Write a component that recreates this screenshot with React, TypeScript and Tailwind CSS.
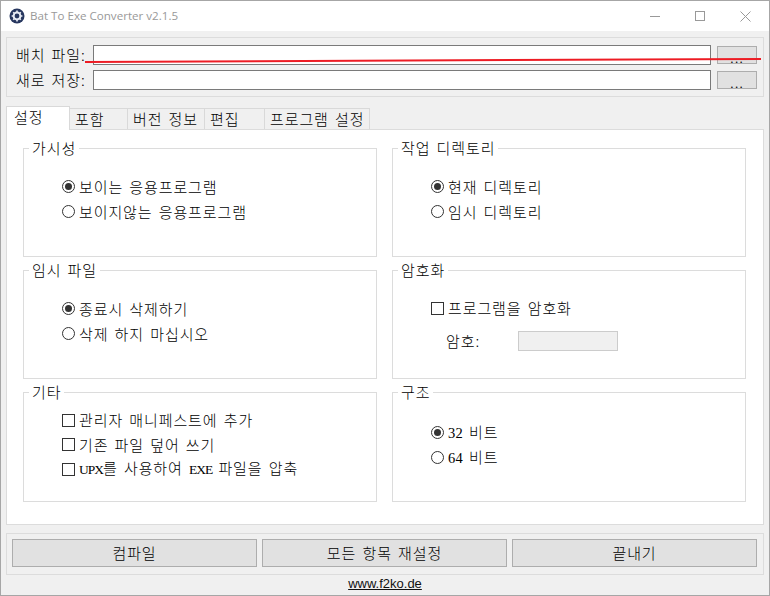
import React from "react";

const ko = "font-['Noto_Sans_CJK_KR','Noto_Sans',sans-serif] font-light text-[15px] tracking-[0.9px] [word-spacing:2px] leading-[20px] text-black";
// latin in the reference is a narrow serif bitmap face
const lat = "font-['Liberation_Serif',serif] font-normal text-[13.5px] tracking-[-1px]";
const num = "font-['Liberation_Serif',serif] font-normal text-[14.5px] tracking-[0.2px]";

function Radio({ label, on }: { label: React.ReactNode; on?: boolean }) {
  return (
    <div className="flex items-center h-[25px]">
      <span className="w-[13px] h-[13px] rounded-full border border-[#333] bg-white flex items-center justify-center mr-[4px]">
        {on && <span className="w-[7px] h-[7px] rounded-full bg-[#333]" />}
      </span>
      <span className={ko}>{label}</span>
    </div>
  );
}

function Check({ label }: { label: React.ReactNode }) {
  return (
    <div className="flex items-center h-[24.5px]">
      <span className="w-[13px] h-[13px] border border-[#333] bg-white mr-[4px]" />
      <span className={ko}>{label}</span>
    </div>
  );
}

function Group({ title, children, h = "h-[109px]" }: { title: string; children: React.ReactNode; h?: string }) {
  return (
    <div className={`border border-[#dcdcdc] ${h} w-[354px]`}>
      <div className={`${ko} -mt-[11px] ml-[5px] px-[3px] bg-white w-fit`}>{title}</div>
      {children}
    </div>
  );
}

function Tab({ label, w, active }: { label: string; w: string; active?: boolean }) {
  if (active) {
    return (
      <div className={`${w} h-[24px] -mt-[2px] -mb-[1px] z-10 bg-white border border-b-0 border-[#d9d9d9] pl-[7px] ${ko}`}>
        {label}
      </div>
    );
  }
  return (
    <div className={`${w} h-[21px] -ml-px bg-[#f0f0f0] border border-b-0 border-[#d9d9d9] pl-[5px] ${ko} leading-[18px]`}>
      {label}
    </div>
  );
}

function Row({ label }: { label: string }) {
  return (
    <div className="flex items-center h-[25px]">
      <span className={`${ko} w-[86px] pl-[9px]`}>{label}</span>
      <div className="w-[618px] h-[20px] bg-white border border-[#7a7a7a]" />
      <button className={`ml-[6px] w-[40px] h-[18px] mt-[1px] bg-[#e1e1e1] border border-[#adadad] ${ko} leading-[18px]`}>...</button>
    </div>
  );
}

function Btn({ label }: { label: string }) {
  return (
    <button className={`w-[245px] h-[28px] bg-[#e1e1e1] border border-[#adadad] ${ko}`}>{label}</button>
  );
}

export default function App() {
  return (
    <div className="relative w-[770px] h-[596px] bg-[#f0f0f0] border border-[#a6a6a6] overflow-hidden">
      <div className="h-[30px] bg-white flex items-center">
        <svg width="16" height="16" viewBox="0 0 16 16" className="ml-[8px] mr-[5px]">
          <circle cx="8" cy="8" r="7.5" fill="#27375f" />
          <circle cx="8" cy="8" r="3.4" fill="none" stroke="#e8ecf4" strokeWidth="2" />
          <path d="M8 2.6v2M8 11.4v2M2.6 8h2M11.4 8h2M4.2 4.2l1.4 1.4M10.4 10.4l1.4 1.4M4.2 11.8l1.4-1.4M10.4 5.6l1.4-1.4" stroke="#e8ecf4" strokeWidth="1.6" />
        </svg>
        <span className="font-['Open_Sans',sans-serif] text-[11.6px] text-[#999]">Bat To Exe Converter v2.1.5</span>
        <div className="ml-auto flex items-center">
          <span className="w-[10px] h-px bg-[#999] mr-[35px]" />
          <span className="w-[10px] h-[10px] border border-[#999] mr-[35px]" />
          <svg width="11" height="11" viewBox="0 0 11 11" className="mr-[18px]">
            <path d="M0.5 0.5l10 10M10.5 0.5l-10 10" stroke="#999" strokeWidth="1" />
          </svg>
        </div>
      </div>

      <div className="mx-[5px] mt-[6px] h-[60px] border border-[#dcdcdc] pt-[4px]">
        <Row label="배치 파일:" />
        <Row label="새로 저장:" />
      </div>

      <div className="mt-[10px] ml-[5px] flex items-end h-[22px]">
        <Tab label="설정" w="w-[64px]" active />
        <Tab label="포함" w="w-[59px]" />
        <Tab label="버전 정보" w="w-[78px]" />
        <Tab label="편집" w="w-[61px]" />
        <Tab label="프로그램 설정" w="w-[106px]" />
      </div>

      <div className="mx-[5px] h-[396px] bg-white border border-[#dcdcdc] pt-[18px] pl-[16px]">
        <div className="grid grid-cols-[354px_354px] gap-x-[15px] gap-y-[13px]">
          <Group title="가시성">
            <div className="pl-[38px] pt-[16px]">
              <Radio label="보이는 응용프로그램" on />
              <Radio label="보이지않는 응용프로그램" />
            </div>
          </Group>
          <Group title="작업 디렉토리">
            <div className="pl-[38px] pt-[16px]">
              <Radio label="현재 디렉토리" on />
              <Radio label="임시 디렉토리" />
            </div>
          </Group>
          <Group title="임시 파일">
            <div className="pl-[38px] pt-[16px]">
              <Radio label="종료시 삭제하기" on />
              <Radio label="삭제 하지 마십시오" />
            </div>
          </Group>
          <Group title="암호화">
            <div className="pl-[38px] pt-[16px]">
              <Check label="프로그램을 암호화" />
              <div className="flex items-center mt-[10px] pl-[15px]">
                <span className={`${ko} w-[72px]`}>암호:</span>
                <div className="w-[100px] h-[20px] bg-[#f0f0f0] border border-[#ccc]" />
              </div>
            </div>
          </Group>
          <Group title="기타" h="h-[110px]">
            <div className="pl-[38px] pt-[6px]">
              <Check label="관리자 매니페스트에 추가" />
              <Check label="기존 파일 덮어 쓰기" />
              <Check
                label={
                  <>
                    <span className={lat}>UPX</span>를 사용하여 <span className={lat}>EXE</span> 파일을 압축
                  </>
                }
              />
            </div>
          </Group>
          <Group title="구조" h="h-[110px]">
            <div className="pl-[38px] pt-[18px]">
              <Radio label={<><span className={num}>32</span> 비트</>} on />
              <Radio label={<><span className={num}>64</span> 비트</>} />
            </div>
          </Group>
        </div>
      </div>

      <div className="mx-[5px] mt-[8px] h-[42px] border border-[#dcdcdc] flex items-start pt-[5px] gap-x-[5px] pl-[5px]">
        <Btn label="컴파일" />
        <Btn label="모든 항목 재설정" />
        <Btn label="끝내기" />
      </div>

      <div className="text-center">
        <a className="block font-['Liberation_Sans',sans-serif] text-[13px] leading-[17px] text-[#111] underline">www.f2ko.de</a>
      </div>

      <svg className="absolute left-0 top-0 pointer-events-none" width="770" height="596">
        <path d="M84 61L760 58" stroke="#ed1c24" strokeWidth="2" />
      </svg>
    </div>
  );
}
